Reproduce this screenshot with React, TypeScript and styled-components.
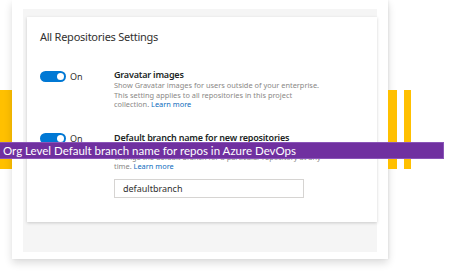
import React from 'react';
import styled, { createGlobalStyle } from 'styled-components';

const GlobalStyle = createGlobalStyle`
    html, body {
        margin: 0;
        padding: 0;
        background: #ffffff;
        overflow: hidden;
    }
    body {
        font-family: "Noto Sans", "Open Sans", Arial, sans-serif;
    }
`;

const Stage = styled.div`
    position: relative;
    width: 474px;
    height: 275px;
    display: flex;
    align-items: flex-start;
    overflow: hidden;
`;

const Accent = styled.div<{ w: number; gapLeft?: number }>`
    width: ${p => p.w}px;
    height: 79px;
    margin-top: 90px;
    margin-left: ${p => p.gapLeft || 0}px;
    background: #ffc000;
    flex-shrink: 0;
`;

const Panel = styled.div`
    width: 376px;
    height: 259px;
    flex-shrink: 0;
    background: #ffffff;
    box-sizing: border-box;
    padding: 9px 11px 7px 11px;
    box-shadow: 0 4px 8px rgba(0, 0, 0, 0.14), 1px 0 2px rgba(0, 0, 0, 0.06);
`;

const Surface = styled.div`
    height: 100%;
    background: #f5f5f5;
    box-sizing: border-box;
    padding: 8px 0 0 4px;
`;

const Card = styled.div`
    height: 205px;
    background: #ffffff;
    box-sizing: border-box;
    padding: 12px 0 0 13px;
    box-shadow: 0 1px 3px rgba(0, 0, 0, 0.18);
`;

const Heading = styled.div`
    font-size: 11px;
    line-height: 16px;
    color: #323130;
    letter-spacing: -0.25px;
    margin-bottom: 24px;
`;

const SettingRow = styled.div`
    display: grid;
    grid-template-columns: 74px 1fr;
    margin-bottom: 22px;
`;

const ToggleWrap = styled.div`
    display: flex;
    align-items: center;
    gap: 4px;
    height: 12px;
    margin-top: 1px;
`;

const Track = styled.div`
    width: 26px;
    height: 11px;
    border-radius: 6px;
    background: #0078d4;
    position: relative;
`;

const Knob = styled.div`
    position: absolute;
    right: 2px;
    top: 2px;
    width: 7px;
    height: 7px;
    border-radius: 50%;
    background: #ffffff;
`;

const ToggleLabel = styled.span`
    font-size: 9px;
    color: #323130;
`;

const Title = styled.div`
    font-size: 9px;
    font-weight: 600;
    line-height: 12px;
    color: #201f1e;
    letter-spacing: -0.2px;
`;

const Desc = styled.div<{ offset?: number }>`
    margin-top: ${p => p.offset || 0}px;
    font-size: 7.4px;
    line-height: 9.5px;
    color: #8a8886;
    width: 215px;
`;

const Link = styled.span`
    color: #0f6cbd;
`;

const TextField = styled.div`
    margin-top: 7px;
    width: 190px;
    height: 19px;
    box-sizing: border-box;
    border: 1px solid #d6d4d2;
    padding-left: 8px;
    display: flex;
    align-items: center;
    font-size: 9px;
    color: #323130;
`;

const Banner = styled.div`
    position: absolute;
    left: 0;
    top: 142px;
    width: 444px;
    height: 17px;
    box-sizing: border-box;
    background: #7030a0;
    border: 1px solid #8a55b8;
    border-left: none;
    color: #ffffff;
    font-family: "Lato", "Noto Sans", sans-serif;
    font-size: 11.5px;
    line-height: 15px;
    padding-left: 3px;
    white-space: nowrap;
`;

const Toggle = () => (
    <ToggleWrap>
        <Track><Knob /></Track>
        <ToggleLabel>On</ToggleLabel>
    </ToggleWrap>
);

const App = () => {
    return (
        <>
            <GlobalStyle />
            <Stage>
                <Accent w={12} />
                <Panel>
                    <Surface>
                        <Card>
                            <Heading>All Repositories Settings</Heading>
                            <SettingRow>
                                <Toggle />
                                <div>
                                    <Title>Gravatar images</Title>
                                    <Desc>
                                        Show Gravatar images for users outside of your enterprise.
                                        This setting applies to all repositories in this project
                                        collection. <Link>Learn more</Link>
                                    </Desc>
                                </div>
                            </SettingRow>
                            <SettingRow>
                                <Toggle />
                                <div>
                                    <Title>Default branch name for new repositories</Title>
                                    <Desc offset={9}>
                                        Change the default branch for a particular repository at any
                                        time. <Link>Learn more</Link>
                                    </Desc>
                                    <TextField>defaultbranch</TextField>
                                </div>
                            </SettingRow>
                        </Card>
                    </Surface>
                </Panel>
                <Accent w={9} />
                <Accent w={7} gapLeft={7} />
                <Banner>Org Level Default branch name for repos in Azure DevOps</Banner>
            </Stage>
        </>
    );
};

export default App;
